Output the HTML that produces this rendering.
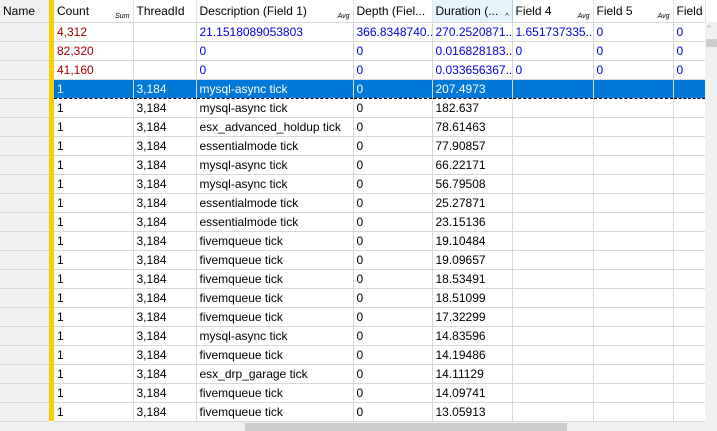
<!DOCTYPE html><html><head><style>
body{margin:0;width:717px;height:431px;overflow:hidden;background:#fff;font-family:"Liberation Sans",sans-serif;font-size:12px;position:relative}
.a{position:absolute}
table{border-collapse:collapse;position:absolute;left:0;top:0;table-layout:fixed;width:705px}
td,th{height:19px;padding:0 0 0 3px;border-right:1px solid #d8d8d8;border-bottom:1px solid #d8d8d8;white-space:nowrap;overflow:hidden;text-align:left;font-weight:normal;box-sizing:border-box}
th{height:22px;background:#fff;border-right:1px solid #e5e5e5;position:relative}
th small{position:absolute;right:3px;bottom:2px;font-size:7px;font-style:italic}
td.n,th.n{background:#f0f0f0;border-right:none}
td.y,th.y{background:#f7cf00;padding:0;border:none}
.r{color:#a00000}.b{color:#0000e0}
tr.sel td{background:#0078d7;color:#fff;border-top:1px dashed #000;border-bottom:1px dashed #000}
tr.sel td.n{background:#f0f0f0;border-top:none;border-bottom:1px solid #d8d8d8}
tr.sel td.y{background:#f7cf00;border-top:none;border-bottom:none}
</style></head><body>
<table>
<colgroup><col style="width:49px"><col style="width:5px"><col style="width:79px"><col style="width:63px"><col style="width:157px"><col style="width:79px"><col style="width:80px"><col style="width:81px"><col style="width:80px"><col style="width:32px"></colgroup>
<tr><th class="n">Name</th><th class="y"></th><th>Count<small>Sum</small></th><th>ThreadId</th><th>Description (Field 1)<small>Avg</small></th><th>Depth (Fiel...</th><th style="background:#e5f3fb;border-right:1px solid #a8d0ea">Duration (...<small>^</small></th><th>Field 4<small>Avg</small></th><th>Field 5<small>Avg</small></th><th>Field</th></tr>
<tr><td class="n"></td><td class="y"></td><td class="r">4,312</td><td></td><td class="b">21.1518089053803</td><td class="b">366.8348740...</td><td class="b">270.2520871...</td><td class="b">1.651737335...</td><td class="b">0</td><td class="b">0</td></tr>
<tr><td class="n"></td><td class="y"></td><td class="r">82,320</td><td></td><td class="b">0</td><td class="b">0</td><td class="b">0.016828183...</td><td class="b">0</td><td class="b">0</td><td class="b">0</td></tr>
<tr><td class="n"></td><td class="y"></td><td class="r">41,160</td><td></td><td class="b">0</td><td class="b">0</td><td class="b">0.033656367...</td><td class="b">0</td><td class="b">0</td><td class="b">0</td></tr>
<tr class="sel"><td class="n"></td><td class="y"></td><td>1</td><td>3,184</td><td>mysql-async tick</td><td>0</td><td>207.4973</td><td></td><td></td><td></td></tr>
<tr><td class="n"></td><td class="y"></td><td>1</td><td>3,184</td><td>mysql-async tick</td><td>0</td><td>182.637</td><td></td><td></td><td></td></tr>
<tr><td class="n"></td><td class="y"></td><td>1</td><td>3,184</td><td>esx_advanced_holdup tick</td><td>0</td><td>78.61463</td><td></td><td></td><td></td></tr>
<tr><td class="n"></td><td class="y"></td><td>1</td><td>3,184</td><td>essentialmode tick</td><td>0</td><td>77.90857</td><td></td><td></td><td></td></tr>
<tr><td class="n"></td><td class="y"></td><td>1</td><td>3,184</td><td>mysql-async tick</td><td>0</td><td>66.22171</td><td></td><td></td><td></td></tr>
<tr><td class="n"></td><td class="y"></td><td>1</td><td>3,184</td><td>mysql-async tick</td><td>0</td><td>56.79508</td><td></td><td></td><td></td></tr>
<tr><td class="n"></td><td class="y"></td><td>1</td><td>3,184</td><td>essentialmode tick</td><td>0</td><td>25.27871</td><td></td><td></td><td></td></tr>
<tr><td class="n"></td><td class="y"></td><td>1</td><td>3,184</td><td>essentialmode tick</td><td>0</td><td>23.15136</td><td></td><td></td><td></td></tr>
<tr><td class="n"></td><td class="y"></td><td>1</td><td>3,184</td><td>fivemqueue tick</td><td>0</td><td>19.10484</td><td></td><td></td><td></td></tr>
<tr><td class="n"></td><td class="y"></td><td>1</td><td>3,184</td><td>fivemqueue tick</td><td>0</td><td>19.09657</td><td></td><td></td><td></td></tr>
<tr><td class="n"></td><td class="y"></td><td>1</td><td>3,184</td><td>fivemqueue tick</td><td>0</td><td>18.53491</td><td></td><td></td><td></td></tr>
<tr><td class="n"></td><td class="y"></td><td>1</td><td>3,184</td><td>fivemqueue tick</td><td>0</td><td>18.51099</td><td></td><td></td><td></td></tr>
<tr><td class="n"></td><td class="y"></td><td>1</td><td>3,184</td><td>fivemqueue tick</td><td>0</td><td>17.32299</td><td></td><td></td><td></td></tr>
<tr><td class="n"></td><td class="y"></td><td>1</td><td>3,184</td><td>mysql-async tick</td><td>0</td><td>14.83596</td><td></td><td></td><td></td></tr>
<tr><td class="n"></td><td class="y"></td><td>1</td><td>3,184</td><td>fivemqueue tick</td><td>0</td><td>14.19486</td><td></td><td></td><td></td></tr>
<tr><td class="n"></td><td class="y"></td><td>1</td><td>3,184</td><td>esx_drp_garage tick</td><td>0</td><td>14.11129</td><td></td><td></td><td></td></tr>
<tr><td class="n"></td><td class="y"></td><td>1</td><td>3,184</td><td>fivemqueue tick</td><td>0</td><td>14.09741</td><td></td><td></td><td></td></tr>
<tr><td class="n"></td><td class="y"></td><td>1</td><td>3,184</td><td>fivemqueue tick</td><td>0</td><td>13.05913</td><td></td><td></td><td></td></tr>
</table>
<div class="a" style="left:705px;top:22px;width:12px;height:401px;background:#f0f0f0"></div>
<div class="a" style="left:706px;top:39px;width:11px;height:8px;background:#cdcdcd"></div>
<div class="a" style="left:707px;top:24px;color:#a0a0a0;font-size:8px">^</div>
<div class="a" style="left:0;top:422px;width:717px;height:9px;background:#f0f0f0"></div>
<div class="a" style="left:245px;top:423px;width:322px;height:8px;background:#cdcdcd"></div>
</body></html>
